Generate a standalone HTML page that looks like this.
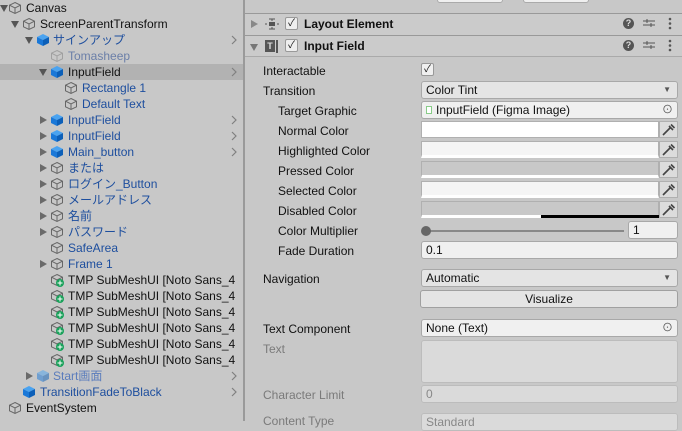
<!DOCTYPE html>
<html><head><meta charset="utf-8"><style>
*{margin:0;padding:0;box-sizing:border-box}
body{width:682px;height:421px;overflow:hidden;background:#c8c8c8;font-family:"Liberation Sans","Noto Sans CJK JP",sans-serif;font-size:12px;color:#111;position:relative}
.a{position:absolute;white-space:nowrap}
.r{position:absolute;left:0;width:243px;height:16px;line-height:16px}
.b{color:#1d4e9e}
.arr{position:absolute;width:0;height:0;border-left:4px solid transparent;border-right:4px solid transparent;border-top:7px solid #555;top:5px}
.arrR{position:absolute;width:0;height:0;border-top:4px solid transparent;border-bottom:4px solid transparent;border-left:7px solid #6a6a6a;top:4px}
.ic{position:absolute;top:1px;width:14px;height:14px}
.chev{position:absolute;left:229px;top:3px;width:10px;height:10px}
.lbl{position:absolute;left:263px}
.l2{left:278px}
.f{position:absolute;left:421px;width:257px;height:18px;border:1px solid #a8a8a8;border-radius:3px;background:#f0f0f0;padding-left:4px;line-height:16px}
.col{position:absolute;left:421px;width:238px;height:17px;border:1px solid #b0b0b0}
.ey{position:absolute;left:659px;width:19px;height:17px;border:1px solid #b0b0b0;background:#dcdcdc}
</style></head><body>
<svg width="0" height="0" style="position:absolute"><defs>
<g id="cube"><path d="M7 1.5 L12.5 4.2 L12.5 9.8 L7 12.5 L1.5 9.8 L1.5 4.2 Z M1.5 4.2 L7 7 L12.5 4.2 M7 7 L7 12.5" fill="none" stroke="#666" stroke-width="1"/></g>
<g id="bcube"><path d="M7 1 L13 4 L7 7 L1 4 Z" fill="#4aa3f0"/><path d="M1 4 L7 7 L7 13 L1 10Z" fill="#1a78d8"/><path d="M13 4 L7 7 L7 13 L13 10Z" fill="#0c5fb8"/></g>
<g id="chv"><path d="M3 1 L7 5 L3 9" fill="none" stroke="#808080" stroke-width="1.2"/></g>
<g id="eye"><path d="M3 13 L10 6 M9 4 L13 8 M11 2.5 L14.5 6" stroke="#444" stroke-width="1.6" fill="none"/></g>
<g id="tmp"><use href="#cube"/><circle cx="10" cy="10" r="4" fill="#19a15a"/><path d="M10 7.5V12.5M7.5 10H12.5" stroke="#fff"/></g>
</defs></svg>
<div class="r" style="top:0"><div class="arr" style="left:0"></div><svg class="ic" style="left:8px"><use href="#cube"/></svg><span class="a" style="left:26px">Canvas</span></div>
<div class="r" style="top:16px"><div class="arr" style="left:11px"></div><svg class="ic" style="left:22px"><use href="#cube"/></svg><span class="a" style="left:40px">ScreenParentTransform</span></div>
<div class="r" style="top:32px"><div class="arr" style="left:25px"></div><svg class="ic" style="left:36px"><use href="#bcube"/></svg><span class="a b" style="left:53px">サインアップ</span><svg class="chev"><use href="#chv"/></svg></div>
<div class="r" style="top:48px"><svg class="ic" style="left:50px;opacity:.4"><use href="#cube"/></svg><span class="a" style="left:68px;color:#6b7fa8">Tomasheep</span></div>
<div class="r" style="top:64px;background:#b2b2b2"><div class="arr" style="left:39px"></div><svg class="ic" style="left:50px"><use href="#bcube"/></svg><span class="a" style="left:68px">InputField</span><svg class="chev"><use href="#chv"/></svg></div>
<div class="r" style="top:80px"><svg class="ic" style="left:64px"><use href="#cube"/></svg><span class="a b" style="left:82px">Rectangle 1</span></div>
<div class="r" style="top:96px"><svg class="ic" style="left:64px"><use href="#cube"/></svg><span class="a b" style="left:82px">Default Text</span></div>
<div class="r" style="top:112px"><div class="arrR" style="left:40px"></div><svg class="ic" style="left:50px"><use href="#bcube"/></svg><span class="a b" style="left:68px">InputField</span><svg class="chev"><use href="#chv"/></svg></div>
<div class="r" style="top:128px"><div class="arrR" style="left:40px"></div><svg class="ic" style="left:50px"><use href="#bcube"/></svg><span class="a b" style="left:68px">InputField</span><svg class="chev"><use href="#chv"/></svg></div>
<div class="r" style="top:144px"><div class="arrR" style="left:40px"></div><svg class="ic" style="left:50px"><use href="#bcube"/></svg><span class="a b" style="left:68px">Main_button</span><svg class="chev"><use href="#chv"/></svg></div>
<div class="r" style="top:160px"><div class="arrR" style="left:40px"></div><svg class="ic" style="left:50px"><use href="#cube"/></svg><span class="a b" style="left:68px">または</span></div>
<div class="r" style="top:176px"><div class="arrR" style="left:40px"></div><svg class="ic" style="left:50px"><use href="#cube"/></svg><span class="a b" style="left:68px">ログイン_Button</span></div>
<div class="r" style="top:192px"><div class="arrR" style="left:40px"></div><svg class="ic" style="left:50px"><use href="#cube"/></svg><span class="a b" style="left:68px">メールアドレス</span></div>
<div class="r" style="top:208px"><div class="arrR" style="left:40px"></div><svg class="ic" style="left:50px"><use href="#cube"/></svg><span class="a b" style="left:68px">名前</span></div>
<div class="r" style="top:224px"><div class="arrR" style="left:40px"></div><svg class="ic" style="left:50px"><use href="#cube"/></svg><span class="a b" style="left:68px">パスワード</span></div>
<div class="r" style="top:240px"><svg class="ic" style="left:50px"><use href="#cube"/></svg><span class="a b" style="left:68px">SafeArea</span></div>
<div class="r" style="top:256px"><div class="arrR" style="left:40px"></div><svg class="ic" style="left:50px"><use href="#cube"/></svg><span class="a b" style="left:68px">Frame 1</span></div>
<div class="r" style="top:272px"><svg class="ic" style="left:50px"><use href="#tmp"/></svg><span class="a" style="left:68px">TMP SubMeshUI [Noto Sans_4</span></div>
<div class="r" style="top:288px"><svg class="ic" style="left:50px"><use href="#tmp"/></svg><span class="a" style="left:68px">TMP SubMeshUI [Noto Sans_4</span></div>
<div class="r" style="top:304px"><svg class="ic" style="left:50px"><use href="#tmp"/></svg><span class="a" style="left:68px">TMP SubMeshUI [Noto Sans_4</span></div>
<div class="r" style="top:320px"><svg class="ic" style="left:50px"><use href="#tmp"/></svg><span class="a" style="left:68px">TMP SubMeshUI [Noto Sans_4</span></div>
<div class="r" style="top:336px"><svg class="ic" style="left:50px"><use href="#tmp"/></svg><span class="a" style="left:68px">TMP SubMeshUI [Noto Sans_4</span></div>
<div class="r" style="top:352px"><svg class="ic" style="left:50px"><use href="#tmp"/></svg><span class="a" style="left:68px">TMP SubMeshUI [Noto Sans_4</span></div>
<div class="r" style="top:368px"><div class="arrR" style="left:26px"></div><svg class="ic" style="left:36px;opacity:.5"><use href="#bcube"/></svg><span class="a" style="left:53px;color:#5a7cbc">Start画面</span><svg class="chev"><use href="#chv"/></svg></div>
<div class="r" style="top:384px"><svg class="ic" style="left:22px"><use href="#bcube"/></svg><span class="a b" style="left:40px">TransitionFadeToBlack</span><svg class="chev"><use href="#chv"/></svg></div>
<div class="r" style="top:400px"><svg class="ic" style="left:8px"><use href="#cube"/></svg><span class="a" style="left:26px">EventSystem</span></div>
<div class="a" style="left:243px;top:0;width:2px;height:421px;background:#9a9a9a"></div>

<div class="a" style="left:437px;top:-8px;width:66px;height:11px;border:1px solid #aaa;background:#efefef;border-radius:3px"></div>
<div class="a" style="left:523px;top:-8px;width:66px;height:11px;border:1px solid #aaa;background:#efefef;border-radius:3px"></div>
<div class="a" style="left:245px;top:13px;width:437px;height:1px;background:#999"></div>
<div class="a" style="left:245px;top:14px;width:437px;height:21px;background:#cbcbcb"></div>
<div class="a" style="left:245px;top:35px;width:437px;height:1px;background:#999"></div>
<div class="a" style="left:245px;top:36px;width:437px;height:21px;background:#cbcbcb"></div>
<div class="a" style="left:245px;top:56px;width:437px;height:1px;background:#aaa"></div>
<div class="arrR" style="left:251px;top:20px;border-left-color:#888"></div>
<svg class="a" style="left:264px;top:17px" width="16" height="14"><path d="M1 7H3M13 7H15M5 2H11M5 12H11M8 2V4M8 10V12" stroke="#555"/><rect x="5" y="5" width="6" height="4" fill="#555"/></svg>
<div class="a" style="left:285px;top:17px;width:13px;height:13px;border:1px solid #999;background:#eee;border-radius:2px;font-size:10px;line-height:11px;text-align:center">✓</div>
<div class="a" style="left:304px;top:17px;font-weight:bold">Layout Element</div>
<div class="arr" style="left:250px;top:44px;border-top-color:#777"></div>
<div class="a" style="left:265px;top:40px;width:10px;height:12px;background:#555;color:#ddd;font-size:9px;font-weight:bold;text-align:center;line-height:12px">T</div>
<div class="a" style="left:276px;top:40px;width:2px;height:13px;background:#555"></div>
<div class="a" style="left:285px;top:39px;width:13px;height:13px;border:1px solid #999;background:#eee;border-radius:2px;font-size:10px;line-height:11px;text-align:center">✓</div>
<div class="a" style="left:304px;top:39px;font-weight:bold">Input Field</div>
<div class="a" style="left:623px;top:18px;width:11px;height:11px;border-radius:50%;background:#555;color:#ddd;font-size:9px;font-weight:bold;text-align:center;line-height:11px">?</div>
<div class="a" style="left:623px;top:40px;width:11px;height:11px;border-radius:50%;background:#555;color:#ddd;font-size:9px;font-weight:bold;text-align:center;line-height:11px">?</div>
<svg class="a" style="left:643px;top:17px" width="12" height="12"><path d="M0 4H12M0 8H12M4 2V6M8 6V10" stroke="#555"/></svg>
<svg class="a" style="left:643px;top:39px" width="12" height="12"><path d="M0 4H12M0 8H12M4 2V6M8 6V10" stroke="#555"/></svg>
<svg class="a" style="left:668px;top:17px" width="4" height="13"><circle cx="2" cy="2" r="1.3" fill="#555"/><circle cx="2" cy="6.5" r="1.3" fill="#555"/><circle cx="2" cy="11" r="1.3" fill="#555"/></svg>
<svg class="a" style="left:668px;top:39px" width="4" height="13"><circle cx="2" cy="2" r="1.3" fill="#555"/><circle cx="2" cy="6.5" r="1.3" fill="#555"/><circle cx="2" cy="11" r="1.3" fill="#555"/></svg>

<div class="lbl a" style="top:64px">Interactable</div>
<div class="a" style="left:421px;top:63px;width:13px;height:13px;border:1px solid #999;background:#f0f0f0;border-radius:2px;font-size:10px;line-height:11px;text-align:center">✓</div>
<div class="lbl a" style="top:84px">Transition</div>
<div class="f" style="top:81px;background:#e4e4e4">Color Tint<span class="a" style="right:6px;top:0;font-size:8px;color:#555">▼</span></div>
<div class="lbl l2 a" style="top:104px">Target Graphic</div>
<div class="f" style="top:101px;padding-left:14px">InputField (Figma Image)<span class="a" style="left:4px;top:4px;width:6px;height:8px;background:#fff;border:1px solid #8c8"></span><span class="a" style="right:4px;top:0;color:#555;font-size:11px">⊙</span></div>
<div class="lbl l2 a" style="top:124px">Normal Color</div>
<div class="col" style="top:121px;background:#fff"></div><svg class="ey" style="top:121px"><use href="#eye"/></svg>
<div class="lbl l2 a" style="top:144px">Highlighted Color</div>
<div class="col" style="top:141px;background:#f5f5f5;border-bottom:3px solid #fff"></div><svg class="ey" style="top:141px"><use href="#eye"/></svg>
<div class="lbl l2 a" style="top:164px">Pressed Color</div>
<div class="col" style="top:161px;background:#c8c8c8;border-bottom:3px solid #fff"></div><svg class="ey" style="top:161px"><use href="#eye"/></svg>
<div class="lbl l2 a" style="top:184px">Selected Color</div>
<div class="col" style="top:181px;background:#f5f5f5;border-bottom:3px solid #fff"></div><svg class="ey" style="top:181px"><use href="#eye"/></svg>
<div class="lbl l2 a" style="top:204px">Disabled Color</div>
<div class="col" style="top:201px;background:#c8c8c8;border-bottom:3px solid #fff"></div>
<div class="a" style="left:541px;top:215px;width:118px;height:3px;background:#000"></div><svg class="ey" style="top:201px"><use href="#eye"/></svg>
<div class="lbl l2 a" style="top:224px">Color Multiplier</div>
<div class="a" style="left:424px;top:230px;width:200px;height:2px;background:#888"></div>
<div class="a" style="left:421px;top:226px;width:10px;height:10px;border-radius:50%;background:#666"></div>
<div class="f" style="top:221px;left:628px;width:50px">1</div>
<div class="lbl l2 a" style="top:244px">Fade Duration</div>
<div class="f" style="top:241px">0.1</div>
<div class="lbl a" style="top:272px">Navigation</div>
<div class="f" style="top:269px;background:#e4e4e4">Automatic<span class="a" style="right:6px;top:0;font-size:8px;color:#555">▼</span></div>
<div class="a" style="left:420px;top:290px;width:258px;height:18px;border:1px solid #a0a0a0;border-radius:3px;background:#e4e4e4;text-align:center;line-height:16px">Visualize</div>
<div class="lbl a" style="top:322px">Text Component</div>
<div class="f" style="top:319px">None (Text)<span class="a" style="right:4px;top:0;color:#555;font-size:11px">⊙</span></div>
<div class="lbl a" style="top:342px;color:#7a7a7a">Text</div>
<div class="a" style="left:421px;top:340px;width:257px;height:43px;border:1px solid #bcbcbc;border-radius:3px;background:#dadada"></div>
<div class="lbl a" style="top:388px;color:#7a7a7a">Character Limit</div>
<div class="f" style="top:385px;background:#dadada;border-color:#bcbcbc;color:#888">0</div>
<div class="lbl a" style="top:414px;color:#7a7a7a">Content Type</div>
<div class="f" style="top:413px;background:#dadada;border-color:#bcbcbc;color:#888">Standard</div>
</body></html>
